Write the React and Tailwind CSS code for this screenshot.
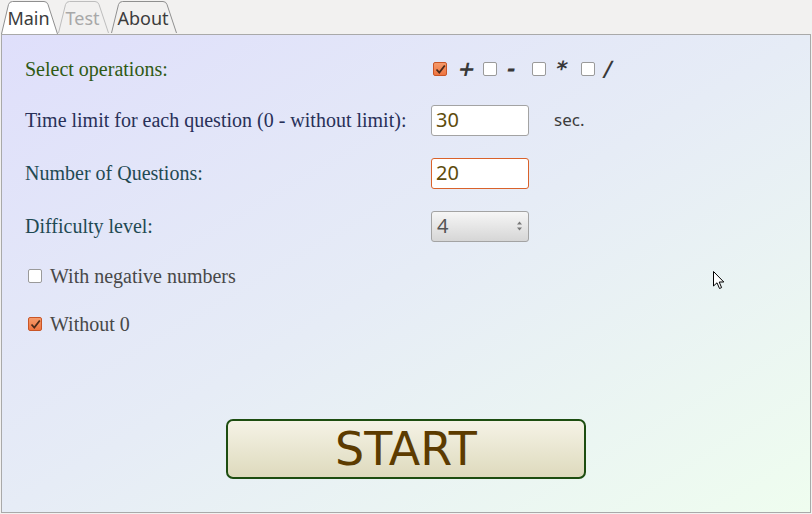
import React from "react";

function TabShape({ w, fill, stroke, open }) {
  const d = `M0.5 ${open ? 34 : 33} L7.5 4.5 Q8.5 1.5 11.5 1.5 L${w - 14} 1.5 Q${w - 11} 1.5 ${w - 10} 4.5 L${w - 0.5} ${open ? 34 : 33}`;
  return (
    <svg className="absolute inset-0" width={w} height={34} viewBox={`0 0 ${w} 34`}>
      <path d={d} fill={fill} stroke={stroke} strokeWidth="1" />
    </svg>
  );
}

function Tab({ w, label, active, disabled }) {
  return (
    <div className={`relative h-[34px] ${active ? "z-10" : ""}`} style={{ width: w }}>
      <TabShape w={w} fill={active ? "#ffffff" : "#f2f1f0"} stroke={disabled ? "#bdbdbd" : "#8f8f8f"} open={active} />
      <div
        className={`relative flex h-full items-center justify-center pt-[2px] pr-[2px] text-[18px] ${disabled ? "text-[#a8a8a8]" : "text-[#3c3c3c]"}`}
        style={{ fontFamily: '"Noto Sans", sans-serif' }}
      >
        {label}
      </div>
    </div>
  );
}

function Check({ checked }) {
  return checked ? (
    <span className="inline-flex h-[14px] w-[14px] items-center justify-center rounded-[2px] border border-[#c95526] bg-linear-to-b from-[#f59a6a] to-[#ee7440]">
      <svg width="11" height="11" viewBox="0 0 11 11">
        <path d="M1.5 5.5 L4.3 8.5 L9.8 1.5" fill="none" stroke="#4a2a1a" strokeWidth="1.8" />
      </svg>
    </span>
  ) : (
    <span className="inline-block h-[14px] w-[14px] rounded-[2px] border border-[#9a9a9a] bg-white" />
  );
}

function Op({ sym, w }) {
  return (
    <span
      className="inline-block -skew-x-12 text-center text-[21px] font-bold leading-none text-[#383838]"
      style={{ fontFamily: '"DejaVu Sans", sans-serif', width: w }}
    >
      {sym}
    </span>
  );
}

const serif = { fontFamily: '"Liberation Serif", serif' };
const sans = { fontFamily: '"Noto Sans", sans-serif' };

export default function App() {
  return (
    <div className="relative flex h-[514px] w-[812px] flex-col bg-[#f2f1f0]">
      <div className="flex h-[34px] items-end pl-[1px]">
        <Tab w={57} label="Main" active />
        <Tab w={51} label="Test" disabled />
        <div className="w-[2px]" />
        <Tab w={66} label="About" />
      </div>
      <div
        className="mb-[1px] ml-[1px] mr-[1px] flex flex-1 flex-col border border-[#a9a9a9] bg-linear-to-br from-[#dfdffb] via-[#e6ecf6] to-[#effdef] pl-[23px] pt-[9px]"
        style={serif}
      >
        <div className="flex h-[50px] items-center">
          <div className="w-[406px] text-[20px] text-[#2f5a14]">Select operations:</div>
          <div className="flex items-center">
            <span className="ml-[2px] flex"><Check checked /></span>
            <span className="ml-[11px] flex"><Op sym="+" w={14} /></span>
            <span className="ml-[11px] flex"><Check /></span>
            <span className="ml-[10px] flex"><Op sym="-" w={8} /></span>
            <span className="ml-[17px] flex"><Check /></span>
            <span className="ml-[10px] flex"><Op sym="*" w={11} /></span>
            <span className="ml-[14px] flex"><Check /></span>
            <span className="ml-[8px] flex"><Op sym="/" w={10} /></span>
          </div>
        </div>
        <div className="flex h-[52px] items-center">
          <div className="w-[406px] text-[20px] text-[#283058]">Time limit for each question (0 - without limit):</div>
          <div
            className="flex h-[31px] w-[98px] items-center rounded-[3px] border border-[#a3a3a3] bg-white pl-[4px] text-[20px] text-[#5e4c0c]"
            style={sans}
          >
            30
          </div>
          <div className="ml-[25px] text-[17px] text-[#3c3c3c]" style={sans}>sec.</div>
        </div>
        <div className="flex h-[54px] items-center">
          <div className="w-[406px] text-[20px] text-[#1f4a53]">Number of Questions:</div>
          <div
            className="flex h-[31px] w-[98px] items-center rounded-[3px] border border-[#d9622b] bg-white pl-[4px] text-[20px] text-[#5e4c0c]"
            style={sans}
          >
            20
          </div>
        </div>
        <div className="flex h-[52px] items-center">
          <div className="w-[406px] text-[20px] text-[#1f4a53]">Difficulty level:</div>
          <div
            className="flex h-[31px] w-[98px] items-center justify-between rounded-[3px] border border-[#a3a3a3] bg-linear-to-b from-[#f6f6f6] to-[#d6d6d6] pl-[5px] pr-[5px] text-[20px] text-[#555]"
            style={sans}
          >
            <span>4</span>
            <svg width="7" height="12" viewBox="0 0 7 12">
              <path d="M3.5 1.5 L6 4.5 L1 4.5 Z" fill="#777" />
              <path d="M3.5 10.5 L6 7.5 L1 7.5 Z" fill="#777" />
            </svg>
          </div>
        </div>
        <div className="flex h-[48px] items-center gap-[8px] pl-[3px]">
          <Check />
          <span className="text-[20px] text-[#484848]">With negative numbers</span>
        </div>
        <div className="flex h-[48px] items-center gap-[8px] pl-[3px]">
          <Check checked />
          <span className="text-[20px] text-[#484848]">Without 0</span>
        </div>
        <div className="mt-[71px] flex justify-center pr-[23px]">
          <button
            className="flex h-[60px] w-[360px] items-center justify-center rounded-[7px] border-2 border-[#1d4d10] bg-linear-to-b from-[#f5f3e6] to-[#dedabd] text-[46px] text-[#5c3b00]"
            style={{ fontFamily: '"DejaVu Sans", sans-serif' }}
          >
            START
          </button>
        </div>
      </div>
      <svg className="absolute left-[713px] top-[271px]" width="12" height="20" viewBox="0 0 12 20">
        <path d="M0.5 0.5 L0.5 15 L4 11.8 L6.5 17.5 L8.6 16.6 L6.2 11 L10.8 11 Z" fill="#fff" stroke="#000" strokeWidth="1" />
      </svg>
    </div>
  );
}
